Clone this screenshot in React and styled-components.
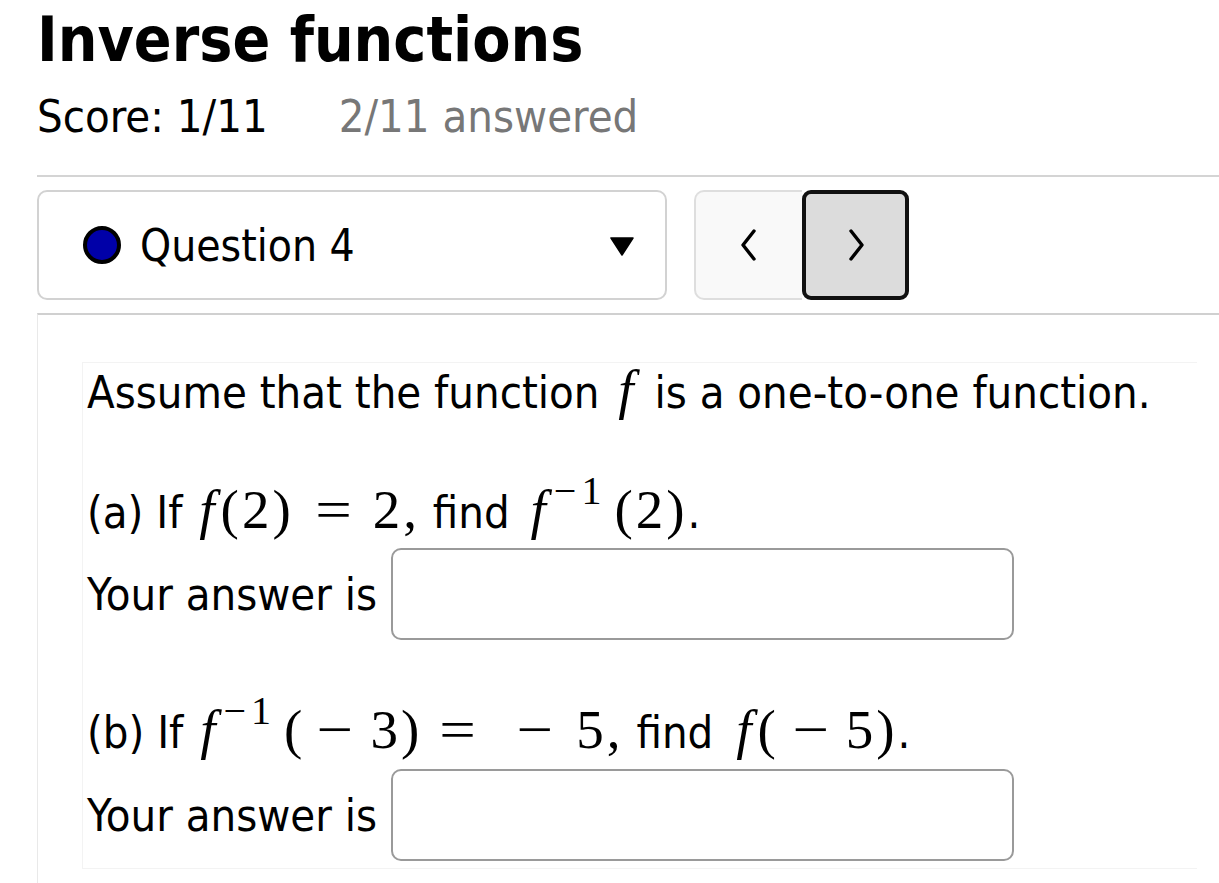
import React from "react";
import styled, { createGlobalStyle } from "styled-components";

const Global = createGlobalStyle`
  html, body { margin: 0; padding: 0; background: #fff; }
  body {
    font-family: "DejaVu Sans Condensed", "DejaVu Sans", sans-serif;
    font-stretch: condensed;
    color: #000;
  }
`;

const Page = styled.div`
  padding: 2px 0 0 37px;
  overflow: hidden;
`;

const Title = styled.h1`
  margin: 0;
  font-size: 62px;
  line-height: 76px;
  font-weight: bold;
`;

const ScoreLine = styled.div`
  margin-top: 13px;
  font-size: 45px;
  line-height: 52px;
  display: flex;
  gap: 71px;
  white-space: nowrap;
`;

const Answered = styled.span`
  color: #777;
`;

const Rule = styled.div`
  margin-top: 32px;
  height: 2px;
  background: #d4d4d4;
`;

const QRow = styled.div`
  margin-top: 13px;
  display: flex;
  align-items: stretch;
  height: 110px;
  gap: 27px;
`;

const QSelect = styled.div`
  box-sizing: border-box;
  width: 630px;
  border: 2px solid #d2d2d2;
  border-radius: 10px;
  display: flex;
  align-items: center;
  padding: 0 31px 0 44px;
  font-size: 44px;
`;

const Dot = styled.span`
  box-sizing: border-box;
  width: 38px;
  height: 38px;
  border-radius: 50%;
  background: #0000a8;
  border: 4px solid #000;
  flex: none;
`;

const QLabel = styled.span`
  margin-left: 19px;
  flex: 1;
  white-space: nowrap;
`;

const Caret = styled.svg`
  width: 24px;
  height: 19px;
  flex: none;
  margin-top: 2px;
`;

const NavGroup = styled.div`
  display: flex;
`;

const NavButton = styled.div`
  box-sizing: border-box;
  width: ${(p) => (p.active ? "107px" : "108px")};
  display: flex;
  align-items: center;
  justify-content: center;
  background: ${(p) => (p.active ? "#dcdcdc" : "#f9f9f9")};
  border: ${(p) => (p.active ? "4px solid #111" : "2px solid #dedede")};
  border-right: ${(p) => (p.active ? "4px solid #111" : "none")};
  border-radius: ${(p) => (p.active ? "9px" : "10px 0 0 10px")};
`;

const Chevron = styled.svg`
  width: 22px;
  height: 34px;
`;

const Content = styled.div`
  margin-top: 13px;
  border-top: 2px solid #d0d0d0;
  border-left: 1px solid #e9e9e9;
  padding: 47px 0 14px 44px;
`;

const Inner = styled.div`
  width: 1110px;
  border: 1px solid #f3f3f3;
  border-right: none;
  padding: 0 0 7px 4px;
  font-size: 45px;
`;

const Line = styled.p`
  margin: ${(p) => p.mt || 0}px 0 0;
  line-height: 60px;
  white-space: nowrap;
`;

const AnswerRow = styled.div`
  margin-top: ${(p) => p.mt || 0}px;
  display: flex;
  align-items: center;
  gap: 14px;
`;

const AnswerInput = styled.div`
  box-sizing: border-box;
  width: 623px;
  height: 92px;
  border: 2px solid #9a9a9a;
  border-radius: 10px;
  background: #fff;
`;

const M = styled.span`
  font-family: "Liberation Serif", "Times New Roman", serif;
  font-size: 55px;
  line-height: 0;
  letter-spacing: ${(p) => (p.i ? 0 : 3)}px;
  font-style: ${(p) => (p.i ? "italic" : "normal")};
  margin-left: ${(p) => p.l || 0}px;
  margin-right: ${(p) => p.r || 0}px;
`;

const Op = styled.span`
  display: inline-block;
  font-family: "Liberation Serif", "Times New Roman", serif;
  font-size: 55px;
  line-height: 0;
  transform: scaleX(1.18);
  margin-left: ${(p) => p.l || 0}px;
  margin-right: ${(p) => p.r || 0}px;
`;

const Sup = styled.span`
  font-family: "Liberation Serif", "Times New Roman", serif;
  font-size: 40px;
  letter-spacing: 5px;
  line-height: 0;
  position: relative;
  top: -24px;
  margin-left: ${(p) => p.l || 0}px;
  margin-right: ${(p) => p.r || 0}px;
`;

function F({ l, r }) {
  return (
    <M i l={l} r={r}>
      f
    </M>
  );
}

export default function App() {
  return (
    <Page>
      <Global />
      <Title>Inverse functions</Title>
      <ScoreLine>
        <span>Score: 1/11</span>
        <Answered>2/11 answered</Answered>
      </ScoreLine>
      <Rule />
      <QRow>
        <QSelect>
          <Dot />
          <QLabel>Question 4</QLabel>
          <Caret viewBox="0 0 24 19">
            <path d="M1 1 L23 1 L12 18 Z" fill="#000" stroke="#000" strokeWidth="1.5" strokeLinejoin="round" />
          </Caret>
        </QSelect>
        <NavGroup>
          <NavButton>
            <Chevron viewBox="0 0 22 34">
              <polyline points="16,3 5,17 16,31" fill="none" stroke="#000" strokeWidth="3.4" strokeLinecap="round" strokeLinejoin="round" />
            </Chevron>
          </NavButton>
          <NavButton active>
            <Chevron viewBox="0 0 22 34">
              <polyline points="6,3 17,17 6,31" fill="none" stroke="#000" strokeWidth="3.4" strokeLinecap="round" strokeLinejoin="round" />
            </Chevron>
          </NavButton>
        </NavGroup>
      </QRow>
      <Content>
        <Inner>
          <Line>
            Assume that the function <F l={6} r={8} /> is a one-to-one function.
          </Line>
          <Line mt={60}>
            (a) If <F l={4} />
            <M l={6}>(2)</M>
            <Op l={24} r={24}>=</Op>
            <M>2,</M> find <F l={8} />
            <Sup l={8} r={8}>−1</Sup>
            <M>(2)</M>.
          </Line>
          <AnswerRow mt={5}>
            <span>Your answer is</span>
            <AnswerInput />
          </AnswerRow>
          <Line mt={63}>
            (b) If <F l={4} />
            <Sup l={8} r={8}>−1</Sup>
            <M>(</M>
            <Op l={14} r={20}>−</Op>
            <M>3)</M>
            <Op l={20} r={46}>=</Op>
            <Op r={26}>−</Op>
            <M>5,</M> find <F l={10} />
            <M l={6}>(</M>
            <Op l={16} r={20}>−</Op>
            <M>5)</M>.
          </Line>
          <AnswerRow mt={6}>
            <span>Your answer is</span>
            <AnswerInput />
          </AnswerRow>
        </Inner>
      </Content>
    </Page>
  );
}
